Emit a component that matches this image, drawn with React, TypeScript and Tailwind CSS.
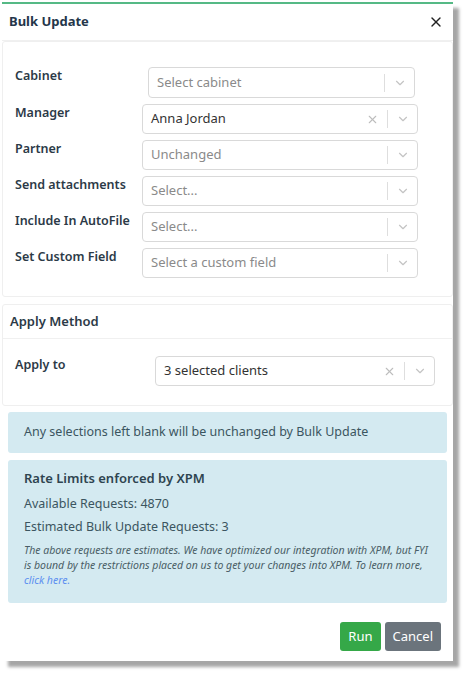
import { X, ChevronDown } from "lucide-react";

interface SelectProps {
  value: string;
  placeholder?: boolean;
  clearable?: boolean;
  className?: string;
}

function Select({ value, placeholder, clearable, className }: SelectProps) {
  return (
    <div className={`h-[30px] flex items-center border border-[#d9d9d9] rounded-[4px] bg-white ${className ?? ""}`}>
      <span className={`flex-1 pl-[8px] text-[13px] ${placeholder ? "text-[#8a8a8a]" : "text-[#333]"}`}>{value}</span>
      {clearable && <X className="w-[13px] h-[13px] mr-[8px] text-[#bdbdbd]" strokeWidth={2} />}
      <span className="w-px h-[18px] bg-[#dedede]" />
      <span className="w-[29px] flex justify-center">
        <ChevronDown className="w-[14px] h-[14px] text-[#c4c4c4]" strokeWidth={2} />
      </span>
    </div>
  );
}

function Row({ label, children }: { label: string; children: React.ReactNode }) {
  return (
    <div className="flex items-start">
      <div className="w-[127px] text-[12.5px] font-semibold text-[#2c3a47]">{label}</div>
      {children}
    </div>
  );
}

export default function App() {
  return (
    <div className="w-[466px] h-[673px] bg-white pl-[2px] pt-[2px]" style={{ fontFamily: '"Noto Sans", "Open Sans", sans-serif' }}>
      <div className="w-[451px] bg-white border-t-2 border-[#55b985] shadow-[6px_6px_3px_rgba(0,0,0,0.35)]">
        <div className="h-[37px] flex items-center justify-between pl-[7px] pr-[9px] border-b border-[#f0f0f0]">
          <h3 className="text-[13px] font-bold text-[#24364a]">Bulk Update</h3>
          <X className="w-[16px] h-[16px] text-[#222]" strokeWidth={2} />
        </div>

        <div className="border border-[#efefef] rounded-[3px] pt-[25px] pb-[18px] pl-[12px] flex flex-col gap-[6px]">
          <Row label="Cabinet">
            <Select value="Select cabinet" placeholder className="w-[267px] ml-[6px] h-[31px]" />
          </Row>
          <Row label="Manager">
            <Select value="Anna Jordan" clearable className="w-[276px]" />
          </Row>
          <Row label="Partner">
            <Select value="Unchanged" placeholder className="w-[276px]" />
          </Row>
          <Row label="Send attachments">
            <Select value="Select..." placeholder className="w-[276px]" />
          </Row>
          <Row label="Include In AutoFile">
            <Select value="Select..." placeholder className="w-[276px]" />
          </Row>
          <Row label="Set Custom Field">
            <Select value="Select a custom field" placeholder className="w-[276px]" />
          </Row>
        </div>

        <div className="mt-[7px] border border-[#efefef] rounded-[3px]">
          <div className="h-[34px] flex items-center pl-[7px] border-b border-[#f0f0f0] text-[13px] font-semibold text-[#2c3a47]">
            Apply Method
          </div>
          <div className="pt-[17px] pb-[19px] pl-[12px] flex items-start">
            <div className="w-[140px] text-[12.5px] font-semibold text-[#2c3a47]">Apply to</div>
            <Select value="3 selected clients" clearable className="w-[280px]" />
          </div>
        </div>

        <div className="mx-[6px] mt-[6px] h-[41px] flex items-center pl-[16px] rounded-[3px] bg-[#d4eaf1] text-[12.5px] text-[#3b5560]">
          Any selections left blank will be unchanged by Bulk Update
        </div>

        <div className="mx-[6px] mt-[7px] rounded-[3px] bg-[#d4eaf1] pt-[9px] pb-[15px] pl-[16px] pr-[4px] text-[#3b5560]">
          <div className="text-[13px] font-semibold text-[#2e4450]">Rate Limits enforced by XPM</div>
          <div className="mt-[6px] text-[12.5px]">Available Requests: 4870</div>
          <div className="mt-[5px] text-[12.5px]">Estimated Bulk Update Requests: 3</div>
          <p className="mt-[6px] text-[10.5px] italic leading-[15px] text-[#4a5e66]">
            The above requests are estimates. We have optimized our integration with XPM, but FYI
            <br />
            is bound by the restrictions placed on us to get your changes into XPM. To learn more,
            <br />
            <span className="text-[#5b8ef0]">click here.</span>
          </p>
        </div>

        <div className="flex justify-end gap-[4px] pt-[19px] pb-[10px] pr-[12px]">
          <button className="h-[29px] px-[8px] rounded-[3px] bg-[#35a848] text-white text-[13px]">Run</button>
          <button className="h-[29px] px-[8px] rounded-[3px] bg-[#6b747c] text-white text-[13px]">Cancel</button>
        </div>
      </div>
    </div>
  );
}
